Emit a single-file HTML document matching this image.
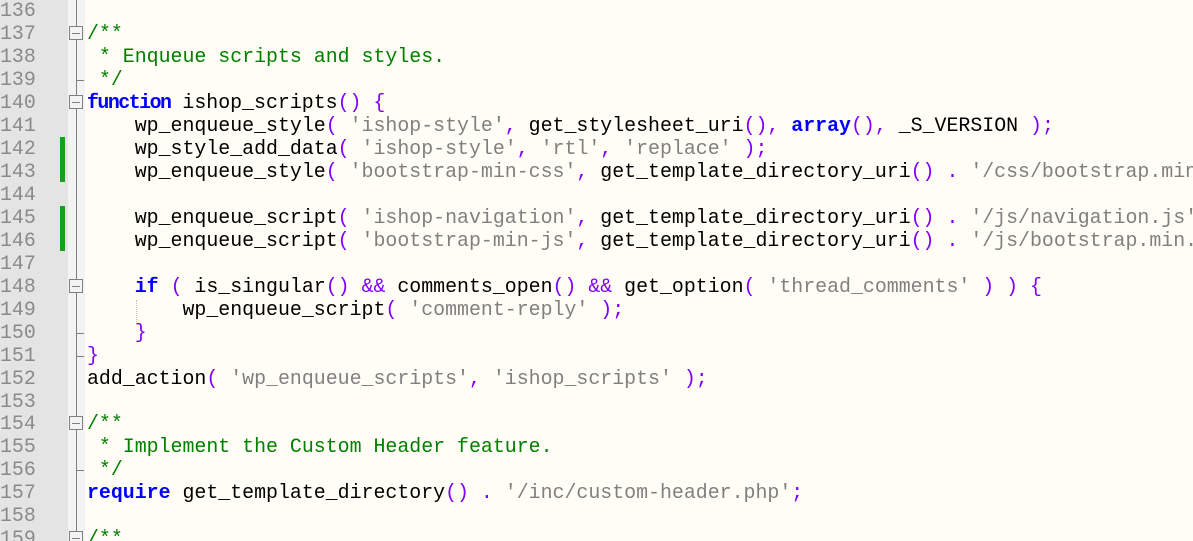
<!DOCTYPE html>
<html><head><meta charset="utf-8"><style>
html,body{margin:0;padding:0;width:1193px;height:541px;overflow:hidden;background:#fffdf5;}
#wrap{position:absolute;left:0;top:0;width:1193px;height:541px;overflow:hidden;}
.gut{position:absolute;left:0;top:0;width:68px;height:541px;background:#e4e4e4;}
.fold{position:absolute;left:68px;top:0;width:17px;height:541px;background:#f3f3f3;}
.fl{position:absolute;left:76px;top:0;width:1px;height:541px;background:#808080;}
.ln{position:absolute;left:0;width:34px;text-align:right;font:19.9px "Liberation Mono",monospace;color:#8a8a8a;line-height:23px;}
.c{position:absolute;left:87px;font:19.9px "Liberation Mono",monospace;line-height:23px;white-space:pre;color:#000;}
.k{color:#0000ff;font-weight:bold;}
.s{color:#808080;}
.o{color:#8000ff;}
.m{color:#008000;}
.box{position:absolute;left:69px;width:14px;height:14px;border:1px solid #808080;background:#f3f3f3;box-sizing:border-box;}
.box:after{content:"";position:absolute;left:2px;right:2px;top:6px;height:1px;background:#808080;}
.tick{position:absolute;left:76px;width:8px;height:1px;background:#808080;}
.gb{position:absolute;left:60px;width:5px;background:#18a018;}
#t{position:absolute;left:0;top:2px;width:1193px;height:541px;}
</style></head><body><div id="wrap">
<div class="gut"></div><div class="fold"></div><div class="fl"></div>
<div class="gb" style="top:137px;height:45px"></div>
<div class="gb" style="top:206px;height:45px"></div>
<div id="t">
<div class="ln" style="top:-3px">136</div>
<div class="ln" style="top:20px">137</div>
<div class="ln" style="top:43px">138</div>
<div class="ln" style="top:66px">139</div>
<div class="ln" style="top:89px">140</div>
<div class="ln" style="top:112px">141</div>
<div class="ln" style="top:135px">142</div>
<div class="ln" style="top:158px">143</div>
<div class="ln" style="top:181px">144</div>
<div class="ln" style="top:204px">145</div>
<div class="ln" style="top:227px">146</div>
<div class="ln" style="top:250px">147</div>
<div class="ln" style="top:273px">148</div>
<div class="ln" style="top:296px">149</div>
<div class="ln" style="top:319px">150</div>
<div class="ln" style="top:342px">151</div>
<div class="ln" style="top:365px">152</div>
<div class="ln" style="top:388px">153</div>
<div class="ln" style="top:410px">154</div>
<div class="ln" style="top:433px">155</div>
<div class="ln" style="top:456px">156</div>
<div class="ln" style="top:479px">157</div>
<div class="ln" style="top:502px">158</div>
<div class="ln" style="top:525px">159</div>

<div class="box" style="top:24px"></div>
<div class="tick" style="top:78px"></div>
<div class="box" style="top:93px"></div>
<div class="box" style="top:277px"></div>
<div class="tick" style="top:331px"></div>
<div class="tick" style="top:354px"></div>
<div class="box" style="top:414px"></div>
<div class="tick" style="top:468px"></div>
<div class="box" style="top:529px"></div>
<div style="position:absolute;left:136px;top:298px;height:22px;border-left:1px dotted #c0c0c0"></div>

<div class="c m" style="top:20px">/**</div>
<div class="c m" style="top:43px"> * Enqueue scripts and styles.</div>
<div class="c m" style="top:66px"> */</div>
<div class="c" style="top:89px"><span class="k" style="letter-spacing:-1.5px">function</span> ishop_scripts<span class="o">()</span> <span class="o">{</span></div>
<div class="c" style="top:112px">    wp_enqueue_style<span class="o">(</span> <span class="s">'ishop-style'</span><span class="o">,</span> get_stylesheet_uri<span class="o">(),</span> <span class="k">array</span><span class="o">(),</span> _S_VERSION <span class="o">);</span></div>
<div class="c" style="top:135px">    wp_style_add_data<span class="o">(</span> <span class="s">'ishop-style'</span><span class="o">,</span> <span class="s">'rtl'</span><span class="o">,</span> <span class="s">'replace'</span> <span class="o">);</span></div>
<div class="c" style="top:158px">    wp_enqueue_style<span class="o">(</span> <span class="s">'bootstrap-min-css'</span><span class="o">,</span> get_template_directory_uri<span class="o">()</span> <span class="o">.</span> <span class="s">'/css/bootstrap.min.css'</span></div>
<div class="c" style="top:204px">    wp_enqueue_script<span class="o">(</span> <span class="s">'ishop-navigation'</span><span class="o">,</span> get_template_directory_uri<span class="o">()</span> <span class="o">.</span> <span class="s">'/js/navigation.js'</span></div>
<div class="c" style="top:227px">    wp_enqueue_script<span class="o">(</span> <span class="s">'bootstrap-min-js'</span><span class="o">,</span> get_template_directory_uri<span class="o">()</span> <span class="o">.</span> <span class="s">'/js/bootstrap.min.js'</span></div>
<div class="c" style="top:273px">    <span class="k">if</span> <span class="o">(</span> is_singular<span class="o">()</span> <span class="o">&amp;&amp;</span> comments_open<span class="o">()</span> <span class="o">&amp;&amp;</span> get_option<span class="o">(</span> <span class="s">'thread_comments'</span> <span class="o">)</span> <span class="o">)</span> <span class="o">{</span></div>
<div class="c" style="top:296px">        wp_enqueue_script<span class="o">(</span> <span class="s">'comment-reply'</span> <span class="o">);</span></div>
<div class="c" style="top:319px">    <span class="o">}</span></div>
<div class="c" style="top:342px"><span class="o">}</span></div>
<div class="c" style="top:365px">add_action<span class="o">(</span> <span class="s">'wp_enqueue_scripts'</span><span class="o">,</span> <span class="s">'ishop_scripts'</span> <span class="o">);</span></div>
<div class="c m" style="top:410px">/**</div>
<div class="c m" style="top:433px"> * Implement the Custom Header feature.</div>
<div class="c m" style="top:456px"> */</div>
<div class="c" style="top:479px"><span class="k">require</span> get_template_directory<span class="o">()</span> <span class="o">.</span> <span class="s">'/inc/custom-header.php'</span><span class="o">;</span></div>
<div class="c m" style="top:525px">/**</div>
</div>
</div></body></html>
